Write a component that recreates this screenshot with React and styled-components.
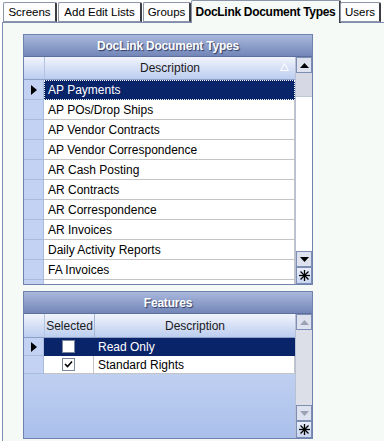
import React from 'react'
import styled, { createGlobalStyle } from 'styled-components'

const GlobalStyle = createGlobalStyle`
  html, body {
    margin: 0;
    padding: 0;
    background: #ffffff;
  }
  body {
    font-family: "Liberation Sans", Arial, sans-serif;
    font-size: 11px;
    color: #000;
  }
`

const Screen = styled.div`
  width: 384px;
  height: 441px;
  overflow: hidden;
  display: flex;
  flex-direction: column;
  background: #ffffff;
`

const TabStrip = styled.div`
  display: flex;
  align-items: flex-end;
  height: 22px;
  padding-left: 3px;
  position: relative;
  z-index: 2;
`

const Tab = styled.div`
  box-sizing: border-box;
  width: ${p => p.w}px;
  flex-shrink: 0;
  height: ${p => (p.active ? '23px' : '20px')};
  margin: ${p => (p.active ? '0 -1px -1px -1px' : '0 1px 0 0')};
  display: flex;
  align-items: center;
  justify-content: center;
  font-size: ${p => (p.active ? '12px' : '11.5px')};
  font-weight: ${p => (p.active ? 'bold' : 'normal')};
  letter-spacing: ${p => (p.active ? '-0.3px' : '0')};
  background: ${p => (p.active ? '#f6faf6' : '#fdfdfd')};
  border: 1px solid #8c96a8;
  border-right: 2px solid #3c3c44;
  border-bottom: ${p => (p.active ? 'none' : '1px solid #8c96a8')};
  border-radius: 2px 2px 0 0;
  white-space: nowrap;
`

const Panel = styled.div`
  flex: 1;
  margin-left: 2px;
  border-left: 1px solid #7d8cb0;
  border-top: 1px solid #7d8cb0;
  background: #f6faf6;
  padding: 11px 0 0 20px;
  display: flex;
  flex-direction: column;
  gap: 6px;
`

const GridFrame = styled.div`
  width: 290px;
  height: ${p => p.h}px;
  box-sizing: border-box;
  border: 1px solid #6f82ad;
  display: flex;
  flex-direction: column;
  background: #ffffff;
`

const Caption = styled.div`
  height: 21px;
  flex-shrink: 0;
  display: flex;
  align-items: center;
  justify-content: center;
  font-size: 12px;
  font-weight: bold;
  letter-spacing: -0.2px;
  color: #ffffff;
  text-shadow: 1px 1px 1px #2a3a66;
  background: linear-gradient(#a9b8dc, #7286b8);
  border-bottom: 1px solid #5d6f9c;
`

const GridBody = styled.div`
  flex: 1;
  display: flex;
  min-height: 0;
`

const Table = styled.div`
  flex: 1;
  display: flex;
  flex-direction: column;
  overflow: hidden;
  background: ${p => (p.filled ? 'linear-gradient(#d2ddf5, #aac0eb)' : '#ffffff')};
`

const HeaderRow = styled.div`
  display: flex;
  height: ${p => p.h}px;
  flex-shrink: 0;
  background: linear-gradient(#f1f4fc, #bccdef);
  border-bottom: 1px solid #8fa0c8;
  box-sizing: border-box;
`

const HeaderCorner = styled.div`
  width: 20px;
  flex-shrink: 0;
  border-right: 1px solid #b6c3e0;
`

const HeaderCell = styled.div`
  flex: ${p => (p.w ? `0 0 ${p.w}px` : '1')};
  box-sizing: border-box;
  display: flex;
  align-items: center;
  justify-content: center;
  position: relative;
  font-size: 12px;
  color: #1a1a1a;
  border-right: ${p => (p.divider ? '1px solid #a8b6d6' : 'none')};
`

const SortGlyph = styled.svg`
  position: absolute;
  right: 6px;
  top: 6px;
`

const Row = styled.div`
  display: flex;
  height: ${p => p.h}px;
  flex-shrink: 0;
  box-sizing: border-box;
`

const RowHeader = styled.div`
  width: 20px;
  flex-shrink: 0;
  box-sizing: border-box;
  background: #c3d2f2;
  border-right: 1px solid #a9badf;
  border-bottom: 1px solid #a9badf;
  display: flex;
  align-items: center;
  justify-content: center;
`

const Cell = styled.div`
  flex: ${p => (p.w ? `0 0 ${p.w}px` : '1')};
  box-sizing: border-box;
  display: flex;
  align-items: center;
  justify-content: ${p => (p.center ? 'center' : 'flex-start')};
  padding-left: ${p => (p.center ? '0' : '4px')};
  font-size: 12px;
  white-space: nowrap;
  overflow: hidden;
  background: ${p => (p.selected ? '#0a246a' : '#ffffff')};
  color: ${p => (p.selected ? '#ffffff' : '#000000')};
  border-bottom: 1px solid ${p => (p.selected ? '#0a246a' : '#c4c4c4')};
  border-right: 1px solid ${p => (p.selected ? '#0a246a' : '#c4c4c4')};
  outline: ${p => (p.focus ? '1px dotted #ffffff' : 'none')};
  outline-offset: -1px;
`

const Check = styled.div`
  width: 11px;
  height: 11px;
  background: #ffffff;
  border: 1px solid #7a8699;
  display: flex;
  align-items: center;
  justify-content: center;
`

const ScrollBar = styled.div`
  width: 16px;
  flex-shrink: 0;
  display: flex;
  flex-direction: column;
  border-left: 1px solid #b7c0d4;
  background: ${p => (p.track === 'grey' ? '#dcdfe8' : '#ffffff')};
`

const ScrollButton = styled.div`
  height: ${p => p.h || 16}px;
  flex-shrink: 0;
  box-sizing: border-box;
  border: 1px solid #7d8db3;
  background: ${p => (p.star ? 'linear-gradient(#e9eefa, #c9d6f1)' : '#dde2ee')};
  display: flex;
  align-items: center;
  justify-content: center;
`

const Thumb = styled.div`
  height: 23px;
  flex-shrink: 0;
  background: #d6d9e3;
  border-bottom: 1px solid #c2c7d6;
`

const Track = styled.div`
  flex: 1;
`

const Arrow = ({ up, color }) => (
  <svg width="9" height="5" viewBox="0 0 9 5">
    {up ? (
      <polygon points="0,5 9,5 4.5,0" fill={color} />
    ) : (
      <polygon points="0,0 9,0 4.5,5" fill={color} />
    )}
  </svg>
)

const Star = () => (
  <svg width="11" height="11" viewBox="0 0 11 11" stroke="#000" strokeWidth="1.3">
    <line x1="5.5" y1="0" x2="5.5" y2="11" />
    <line x1="0" y1="5.5" x2="11" y2="5.5" />
    <line x1="1.5" y1="1.5" x2="9.5" y2="9.5" />
    <line x1="9.5" y1="1.5" x2="1.5" y2="9.5" />
  </svg>
)

const Pointer = () => (
  <svg width="6" height="10" viewBox="0 0 6 10">
    <polygon points="0,0 6,5 0,10" fill="#000" />
  </svg>
)

const CheckMark = () => (
  <svg width="9" height="9" viewBox="0 0 9 9">
    <polyline points="1,4 3.5,6.5 8,1.5" fill="none" stroke="#000" strokeWidth="1.6" />
  </svg>
)

const docTypes = [
  'AP Payments',
  'AP POs/Drop Ships',
  'AP Vendor Contracts',
  'AP Vendor Correspondence',
  'AR Cash Posting',
  'AR Contracts',
  'AR Correspondence',
  'AR Invoices',
  'Daily Activity Reports',
  'FA Invoices',
  'FA Maintenance Agreements',
]

const features = [
  { name: 'Read Only', checked: false },
  { name: 'Standard Rights', checked: true },
]

const tabs = [
  { label: 'Screens', w: 54 },
  { label: 'Add Edit Lists', w: 84 },
  { label: 'Groups', w: 48 },
  { label: 'DocLink Document Types', w: 150, active: true },
  { label: 'Users', w: 41 },
]

const App = () => {
  return (
    <Screen>
      <GlobalStyle />
      <TabStrip>
        {tabs.map(t => (
          <Tab key={t.label} w={t.w} active={t.active}>{t.label}</Tab>
        ))}
      </TabStrip>
      <Panel>
        <GridFrame h={251}>
          <Caption>DocLink Document Types</Caption>
          <GridBody>
            <Table>
              <HeaderRow h={23}>
                <HeaderCorner />
                <HeaderCell>
                  Description
                  <SortGlyph width="9" height="8" viewBox="0 0 9 8">
                    <polygon points="4.5,0.5 8.5,7.5 0.5,7.5" fill="none" stroke="#ffffff" strokeWidth="1" />
                  </SortGlyph>
                </HeaderCell>
              </HeaderRow>
              {docTypes.map((d, i) => (
                <Row key={d} h={20}>
                  <RowHeader>{i === 0 && <Pointer />}</RowHeader>
                  <Cell selected={i === 0} focus={i === 0}>{d}</Cell>
                </Row>
              ))}
            </Table>
            <ScrollBar>
              <ScrollButton><Arrow up color="#000" /></ScrollButton>
              <Thumb />
              <Track />
              <ScrollButton><Arrow color="#000" /></ScrollButton>
              <ScrollButton star h={17}><Star /></ScrollButton>
            </ScrollBar>
          </GridBody>
        </GridFrame>

        <GridFrame h={148}>
          <Caption>Features</Caption>
          <GridBody>
            <Table filled>
              <HeaderRow h={24}>
                <HeaderCorner />
                <HeaderCell w={50} divider>Selected</HeaderCell>
                <HeaderCell>Description</HeaderCell>
              </HeaderRow>
              {features.map((f, i) => (
                <Row key={f.name} h={18}>
                  <RowHeader>{i === 0 && <Pointer />}</RowHeader>
                  <Cell w={50} center selected={i === 0}>
                    <Check>{f.checked && <CheckMark />}</Check>
                  </Cell>
                  <Cell selected={i === 0}>{f.name}</Cell>
                </Row>
              ))}
            </Table>
            <ScrollBar track="grey">
              <ScrollButton><Arrow up color="#9aa3b5" /></ScrollButton>
              <Track />
              <ScrollButton><Arrow color="#9aa3b5" /></ScrollButton>
              <ScrollButton star h={17}><Star /></ScrollButton>
            </ScrollBar>
          </GridBody>
        </GridFrame>
      </Panel>
    </Screen>
  )
}

export default App
